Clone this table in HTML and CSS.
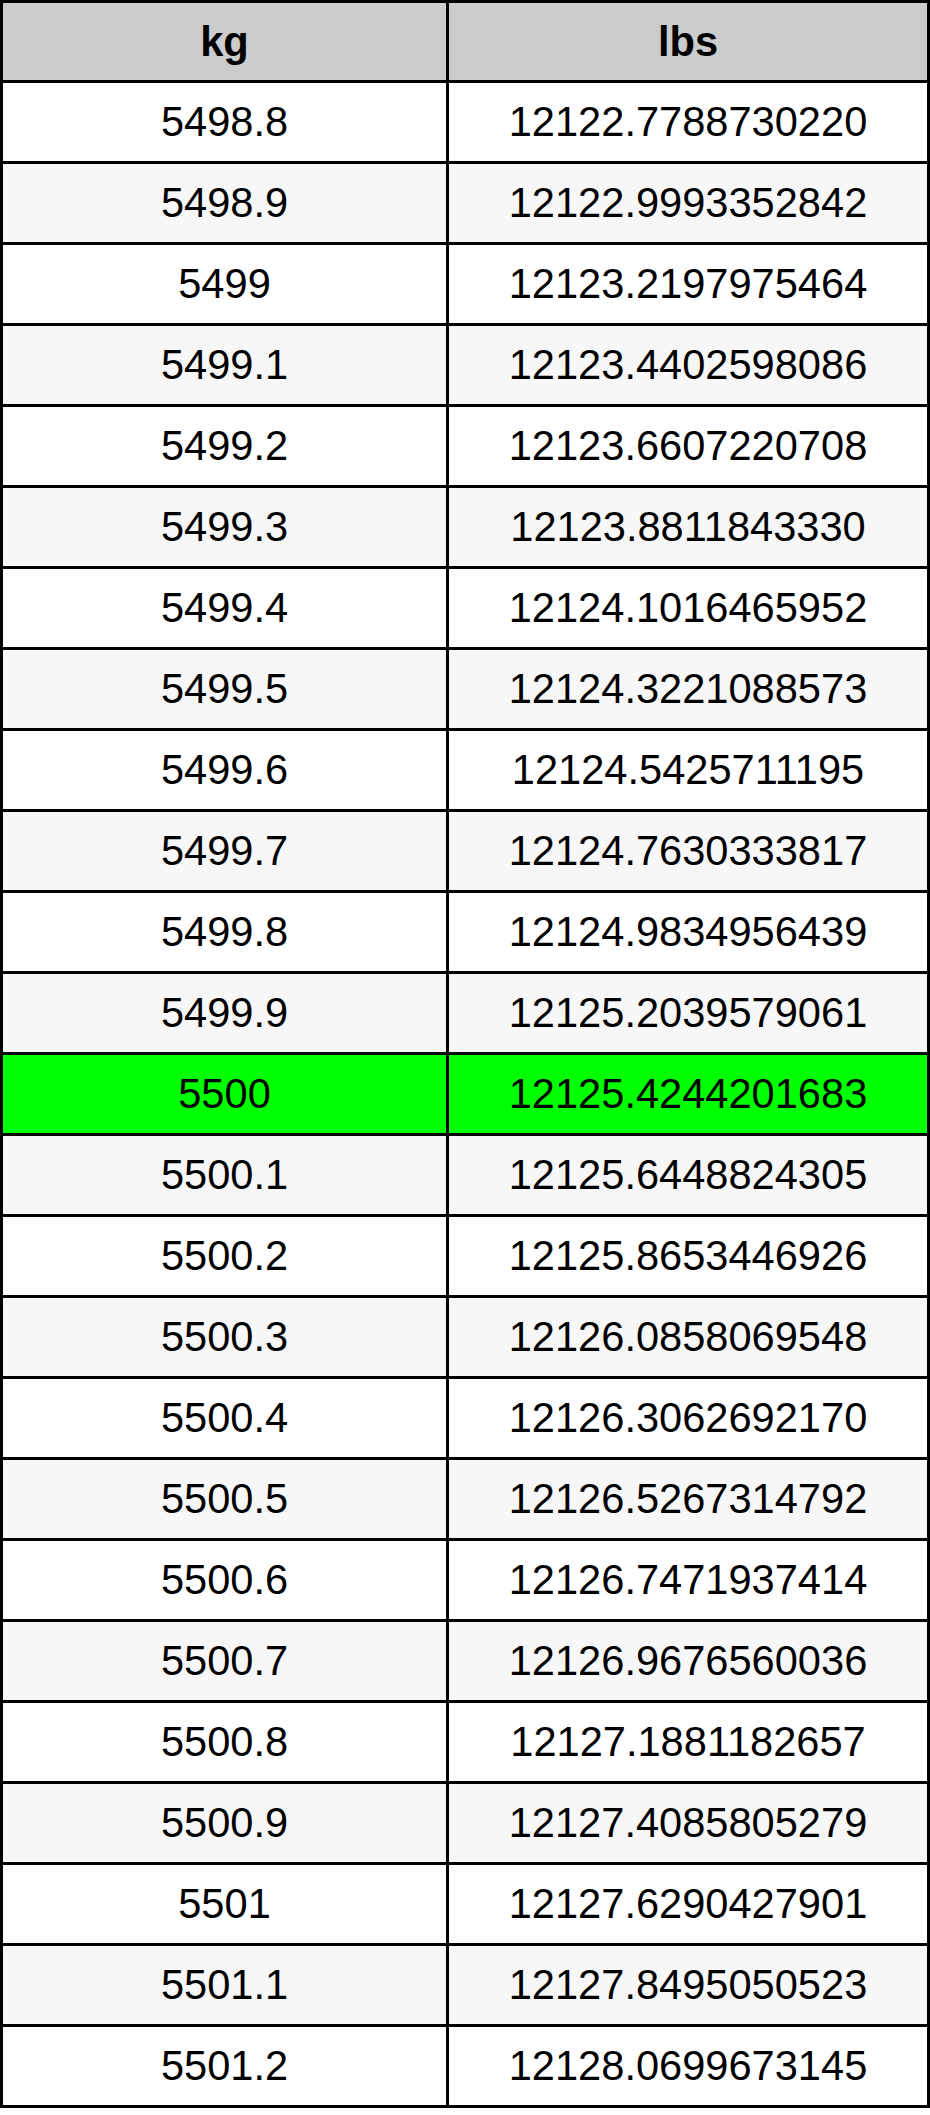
FILE: index.html
```html
<!DOCTYPE html>
<html>
<head>
<meta charset="utf-8">
<link rel="stylesheet" href="styles.css">
</head>
<body>
<table class="conv">
<thead>
<tr><th class="c1">kg</th><th class="c2">lbs</th></tr>
</thead>
<tbody>
<tr><td>5498.8</td><td>12122.7788730220</td></tr>
<tr><td>5498.9</td><td>12122.9993352842</td></tr>
<tr><td>5499</td><td>12123.2197975464</td></tr>
<tr><td>5499.1</td><td>12123.4402598086</td></tr>
<tr><td>5499.2</td><td>12123.6607220708</td></tr>
<tr><td>5499.3</td><td>12123.8811843330</td></tr>
<tr><td>5499.4</td><td>12124.1016465952</td></tr>
<tr><td>5499.5</td><td>12124.3221088573</td></tr>
<tr><td>5499.6</td><td>12124.5425711195</td></tr>
<tr><td>5499.7</td><td>12124.7630333817</td></tr>
<tr><td>5499.8</td><td>12124.9834956439</td></tr>
<tr><td>5499.9</td><td>12125.2039579061</td></tr>
<tr class="hl"><td>5500</td><td>12125.4244201683</td></tr>
<tr><td>5500.1</td><td>12125.6448824305</td></tr>
<tr><td>5500.2</td><td>12125.8653446926</td></tr>
<tr><td>5500.3</td><td>12126.0858069548</td></tr>
<tr><td>5500.4</td><td>12126.3062692170</td></tr>
<tr><td>5500.5</td><td>12126.5267314792</td></tr>
<tr><td>5500.6</td><td>12126.7471937414</td></tr>
<tr><td>5500.7</td><td>12126.9676560036</td></tr>
<tr><td>5500.8</td><td>12127.1881182657</td></tr>
<tr><td>5500.9</td><td>12127.4085805279</td></tr>
<tr><td>5501</td><td>12127.6290427901</td></tr>
<tr><td>5501.1</td><td>12127.8495050523</td></tr>
<tr><td>5501.2</td><td>12128.0699673145</td></tr>
</tbody>
</table>
</body>
</html>
```
FILE: styles.css
```css
html, body {
  margin: 0;
  padding: 0;
  background: #ffffff;
}

.conv {
  width: 930px;
  table-layout: fixed;
  border-collapse: separate;
  border-spacing: 0;
  border-top: 3px solid #000;
  border-left: 3px solid #000;
  font-family: "Liberation Sans", Arial, sans-serif;
  font-size: 41.6px;
  color: #000;
}

.conv th,
.conv td {
  box-sizing: border-box;
  padding: 0;
  text-align: center;
  border-right: 3px solid #000;
  border-bottom: 3px solid #000;
  line-height: 78px;
  white-space: nowrap;
}

.conv th {
  background: #cccccc;
  font-weight: bold;
  line-height: 77px;
}

.conv .c1 {
  width: 446px;
}

.conv .c2 {
  width: 481px;
}

.conv tbody tr:nth-child(odd) td {
  background: #ffffff;
}

.conv tbody tr:nth-child(even) td {
  background: #f7f7f7;
}

.conv tbody tr.hl td {
  background: #00ff00;
}
```
